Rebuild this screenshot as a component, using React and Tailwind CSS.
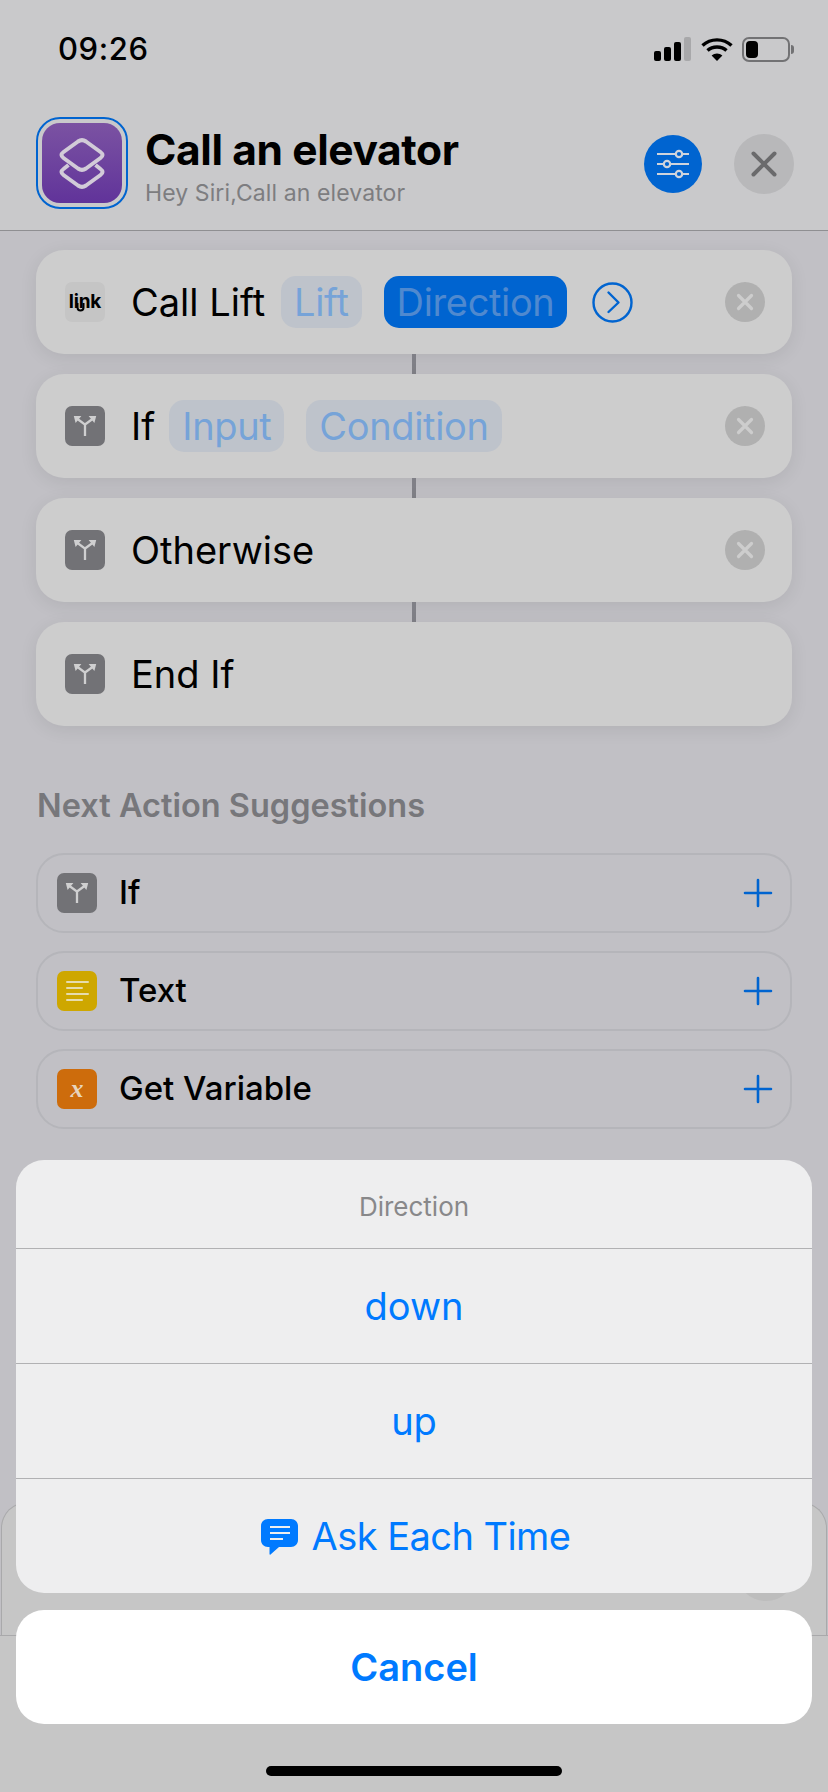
const BLUE = "#007aff";

function Fork({ size = 26 }) {
  return (
    <svg width={size} height={size} viewBox="0 0 26 26" fill="none" stroke="#cfcfd0" strokeWidth="2.3">
      <path d="M13 23V11.5L5.5 6M13 11.5L20.5 6" />
      <path d="M1.8 3H9.4L3.6 10Z M24.2 3H16.6L22.4 10Z" fill="#cfcfd0" stroke="none" />
    </svg>
  );
}

function IconTile({ color, children }) {
  return (
    <div className="relative w-10 h-10 shrink-0 rounded-[7px] flex items-center justify-center" style={{ backgroundColor: color }}>
      {children}
    </div>
  );
}

function RemoveBtn() {
  return (
    <div className="w-10 h-10 rounded-full bg-[#b0b0b0] flex items-center justify-center">
      <svg width="20" height="20" viewBox="0 0 20 20" stroke="#cdcdcd" strokeWidth="3.2" strokeLinecap="round">
        <path d="M3.5 3.5L16.5 16.5M16.5 3.5L3.5 16.5" />
      </svg>
    </div>
  );
}

function Pill({ label, active }) {
  return (
    <span className={`h-[52px] px-[13px] rounded-[15px] flex items-center text-[38px] tracking-[-0.35px] ${active ? "bg-[#0064d0] text-[#4f89cf]" : "bg-[#bec3cb] text-[#76a3d8]"}`}>
      {label}
    </span>
  );
}

function ActionCard({ icon, label, children, removable = true }) {
  return (
    <div className="h-[104px] rounded-[28px] bg-[#cdcdcd] shadow-[0_4px_18px_rgba(0,0,0,0.08)] flex items-center pl-[29px] pr-[27px]">
      {icon}
      <span className="ml-[26px] text-[38px] text-black">{label}</span>
      {children}
      {removable && <div className="ml-auto"><RemoveBtn /></div>}
    </div>
  );
}

function Connector() {
  return <div className="w-1 h-5 mx-auto bg-[#808087]" />;
}

function SuggestionRow({ icon, label }) {
  return (
    <div className="h-20 rounded-[28px] border-2 border-[#b5b5ba] flex items-center pl-[19px] pr-[17px]">
      {icon}
      <span className="ml-[22px] text-[33px] font-medium text-black">{label}</span>
      <svg className="ml-auto" width="30" height="30" viewBox="0 0 30 30" stroke="#0064d0" strokeWidth="2.6" strokeLinecap="round">
        <path d="M15 2V28M2 15H28" />
      </svg>
    </div>
  );
}

function SheetRow({ children, border = true }) {
  return (
    <div className={`h-[115px] flex items-center justify-center text-[38px] text-[#007aff] ${border ? "border-t border-[#b1b1b3]" : ""}`}>
      {children}
    </div>
  );
}

export default function App() {
  return (
    <div className="relative w-[828px] h-[1792px] overflow-hidden flex flex-col bg-[#c1c0c5] font-['Inter',sans-serif]">
      {/* Header */}
      <div className="h-[231px] shrink-0 bg-[#c9c9cb] border-b border-[#8f8f92] flex flex-col">
        <div className="h-[98px] flex items-center pl-[58px] pr-[38px] pt-0">
          <span className="text-[31px] font-medium tracking-[0.6px] text-black">09:26</span>
          <div className="ml-auto flex items-center">
            <svg width="37" height="24" viewBox="0 0 37 24">
              <rect x="0" y="14" width="7" height="10" rx="2" fill="#000" />
              <rect x="10" y="10" width="7" height="14" rx="2" fill="#000" />
              <rect x="20" y="5" width="7" height="19" rx="2" fill="#000" />
              <rect x="30" y="0" width="7" height="24" rx="2" fill="#a8a8aa" />
            </svg>
            <svg className="ml-[10px]" width="32" height="24" viewBox="0 0 32 24" fill="none" stroke="#000" strokeWidth="3.4">
              <path d="M1.5 8.5C9.5 1 22.5 1 30.5 8.5" />
              <path d="M6.5 13.5C11.5 8.8 20.5 8.8 25.5 13.5" />
              <path d="M16 24L10.6 18.6C13.6 15.8 18.4 15.8 21.4 18.6Z" fill="#000" stroke="none" />
            </svg>
            <div className="relative ml-[9px] w-[48px] h-[25px] rounded-[7px] border-2 border-[#727274] p-[2px] flex">
              <div className="w-[12px] h-full rounded-[4px] bg-black" />
              <div className="absolute -right-[6px] top-[6px] w-[3px] h-[9px] rounded-r-sm bg-[#727274]" />
            </div>
          </div>
        </div>
        <div className="flex items-start pl-[36px] pr-[34px] pt-[19px]">
          <div className="w-[92px] h-[92px] shrink-0 rounded-[24px] border-[2.5px] border-[#0064d0] flex items-center justify-center">
            <div className="w-[80px] h-[80px] rounded-[18px] bg-gradient-to-b from-[#7b52a2] to-[#61339a] flex items-center justify-center">
              <svg width="46" height="51" viewBox="0 0 46 51" fill="none" stroke="#d2cbd8" strokeWidth="4" strokeLinejoin="round">
                <path d="M9.5 27L4.5 31C1.8 33 1.8 35 4.5 37L19 47.5C21.8 49.4 24.2 49.4 27 47.5L41.5 37C44.2 35 44.2 33 41.5 31L36.5 27" />
                <path d="M19 3.5C21.8 1.6 24.2 1.6 27 3.5L41.5 14C44.2 16 44.2 18 41.5 20L27 30.5C24.2 32.4 21.8 32.4 19 30.5L4.5 20C1.8 18 1.8 16 4.5 14Z" />
              </svg>
            </div>
          </div>
          <div className="ml-[17px] flex flex-col">
            <span className="text-[42.5px] leading-[50px] font-bold tracking-[-0.4px] text-black mt-[8px]">Call an elevator</span>
            <span className="text-[23px] leading-[28px] tracking-[0.1px] text-[#7d7d80] mt-[4px]">Hey Siri,Call an elevator</span>
          </div>
          <div className="ml-auto mt-[17px] flex items-center gap-[32px]">
            <div className="w-[58px] h-[58px] rounded-full bg-[#0064d0] flex items-center justify-center">
              <svg width="36" height="30" viewBox="0 0 36 30" fill="#0064d0" stroke="#cfd4dc" strokeWidth="2.2">
                <path d="M2 5H34M2 15H34M2 25H34" />
                <circle cx="24" cy="5" r="3.2" />
                <circle cx="12" cy="15" r="3.2" />
                <circle cx="24" cy="25" r="3.2" />
              </svg>
            </div>
            <div className="w-[60px] h-[60px] rounded-full bg-[#b8b8ba] flex items-center justify-center">
              <svg width="26" height="26" viewBox="0 0 26 26" stroke="#6a6a6c" strokeWidth="4" strokeLinecap="round">
                <path d="M2.5 2.5L23.5 23.5M23.5 2.5L2.5 23.5" />
              </svg>
            </div>
          </div>
        </div>
      </div>

      {/* Actions */}
      <div className="px-[36px] pt-[19px] flex flex-col">
        <ActionCard
          label="Call Lift"
          icon={
            <IconTile color="#c5c5c5">
              <span className="text-[19px] font-bold tracking-[-0.2px] text-black">link</span>
              <svg className="absolute left-0 top-0" width="40" height="40" viewBox="0 0 40 40" fill="none" stroke="#000" strokeWidth="2">
                <path d="M12.5 21V25.5C12.5 29.5 18.5 29.5 18.5 25.5V21" />
              </svg>
            </IconTile>
          }
        >
          <div className="ml-4"><Pill label="Lift" /></div>
          <div className="ml-[22px]"><Pill label="Direction" active /></div>
          <svg className="ml-[25px]" width="41" height="41" viewBox="0 0 41 41" fill="none" stroke="#0064d0" strokeWidth="2.4" strokeLinecap="round" strokeLinejoin="round">
            <circle cx="20.5" cy="20.5" r="19" />
            <path d="M16.5 10.5L26.5 20.5L16.5 30" />
          </svg>
        </ActionCard>
        <Connector />
        <ActionCard label="If" icon={<IconTile color="#727276"><Fork /></IconTile>}>
          <div className="ml-[14px]"><Pill label="Input" /></div>
          <div className="ml-[22px]"><Pill label="Condition" /></div>
        </ActionCard>
        <Connector />
        <ActionCard label="Otherwise" icon={<IconTile color="#727276"><Fork /></IconTile>} />
        <Connector />
        <ActionCard label="End If" removable={false} icon={<IconTile color="#727276"><Fork /></IconTile>} />
      </div>

      {/* Suggestions */}
      <div className="px-[36px] pt-[60px] flex flex-col">
        <h2 className="text-[32.5px] leading-[40px] font-semibold text-[#77777b] ml-[1px] mb-[27px]">Next Action Suggestions</h2>
        <div className="flex flex-col gap-[18px]">
          <SuggestionRow label="If" icon={<IconTile color="#727276"><Fork /></IconTile>} />
          <SuggestionRow
            label="Text"
            icon={
              <IconTile color="#cea700">
                <svg width="24" height="24" viewBox="0 0 24 24" stroke="#e6dcae" strokeWidth="2" strokeLinecap="round">
                  <path d="M2 3H23M2 9H17M2 15H23M2 21H17" />
                </svg>
              </IconTile>
            }
          />
          <SuggestionRow
            label="Get Variable"
            icon={
              <IconTile color="#cd6c0c">
                <span className="font-['Liberation_Serif',serif] text-[26px] leading-none font-bold italic text-[#e8d5bd]">x</span>
              </IconTile>
            }
          />
        </div>
      </div>

      {/* Panel behind the sheet */}
      <div className="relative mt-auto h-[133px] mx-[1px] rounded-t-[26px] border border-b-0 border-[#a9a9ab] bg-[#c6c6c6]">
        <div className="absolute right-[30px] top-[38px] w-[60px] h-[60px] rounded-full bg-[#bdbdbd]" />
      </div>
      <div className="h-[157px] shrink-0 bg-[#c6c6c6] border-t border-[#a9a9ab]" />

      {/* Action sheet */}
      <div className="absolute left-4 right-4 top-[1160px] rounded-[28px] bg-[#eeeeef] overflow-hidden">
        <div className="h-[88px] pt-[4px] flex items-center justify-center text-[26px] text-[#88888a]">Direction</div>
        <SheetRow>down</SheetRow>
        <SheetRow>up</SheetRow>
        <SheetRow>
          <svg className="ml-[3px] mr-[14px] mt-[2px]" width="37" height="36" viewBox="0 0 37 36">
            <path d="M7 0H30C34 0 37 3 37 7V21C37 25 34 28 30 28H18L9.5 35.5C9 36 8.5 35.5 8.5 35V28H7C3 28 0 25 0 21V7C0 3 3 0 7 0Z" fill={BLUE} />
            <path d="M9 8H29M9 14H29M9 20H22" stroke="#eeeeef" strokeWidth="2.2" />
          </svg>
          <span className="tracking-[-0.55px]">Ask Each Time</span>
        </SheetRow>
      </div>
      <div className="absolute left-4 right-4 top-[1610px] h-[114px] rounded-[28px] bg-white flex items-center justify-center text-[38px] font-semibold text-[#007aff]">
        Cancel
      </div>

      {/* Home indicator */}
      <div className="absolute left-[266px] top-[1766px] w-[296px] h-[10px] rounded-full bg-black" />
    </div>
  );
}
